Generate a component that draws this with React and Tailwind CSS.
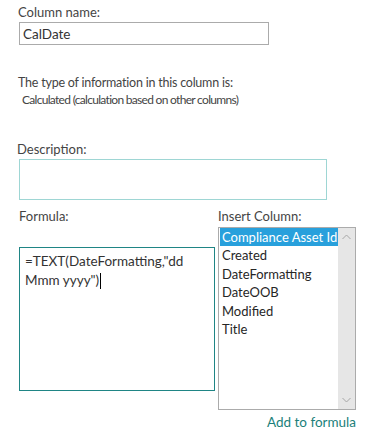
import React from 'react';

const items = ['Compliance Asset Id', 'Created', 'DateFormatting', 'DateOOB', 'Modified', 'Title'];

function Chevron({ up }) {
  return (
    <svg width="9" height="6" viewBox="0 0 9 6" className="block">
      <path
        d={up ? 'M0.5 5 L4.5 1 L8.5 5' : 'M0.5 1 L4.5 5 L8.5 1'}
        fill="none"
        stroke="#a6a6a6"
        strokeWidth="1"
      />
    </svg>
  );
}

export default function App() {
  return (
    <div
      className="w-[369px] h-[435px] bg-white text-[#444] text-[13px] leading-[18px] overflow-hidden"
      style={{ fontFamily: 'Lato, "Open Sans", sans-serif' }}
    >
      <div className="pt-[3px] pl-[18px]">Column name:</div>
      <div className="ml-[19px] mt-px w-[250px] h-[23px] border border-[#ababab] pl-[3px] flex items-center text-[#333] text-[13.5px]">
        CalDate
      </div>

      <div className="mt-[29px] pl-[18px] text-[12.5px] tracking-[-0.22px]">
        The type of information in this column is:
      </div>
      <div className="mt-[-1px] pl-[22px] text-[12px] tracking-[-0.7px]">
        Calculated (calculation based on other columns)
      </div>

      <div className="mt-[31px] pl-[17px]">Description:</div>
      <div className="ml-[19px] mt-px w-[308px] h-[41px] border border-[#9ed6d4]" />

      <div className="mt-[7px] flex">
        <div className="ml-[19px] w-[196px]">
          <div>Formula:</div>
          <div className="mt-[22px] h-[144px] border border-[#1f8585] px-[5px] pt-[4px] text-[#333] text-[13.5px] leading-[19px]">
            <div>=TEXT(DateFormatting,"dd</div>
            <div className="flex items-center">
              Mmm yyyy")<span className="inline-block w-px h-[16px] bg-black ml-px" />
            </div>
          </div>
        </div>

        <div className="ml-[3px] w-[138px]">
          <div>Insert Column:</div>
          <div className="mt-[2px] h-[183px] border border-[#ababab] flex text-[13px] leading-[18.4px] text-[#262626]">
            <div className="flex-1 pl-px">
              {items.map((it, i) => (
                <div
                  key={it}
                  className={
                    i === 0
                      ? 'bg-[#28a0dc] text-white pl-[2px] whitespace-nowrap overflow-hidden'
                      : 'pl-[2px] whitespace-nowrap overflow-hidden'
                  }
                >
                  {it}
                </div>
              ))}
            </div>
            <div className="w-[17px] bg-[#e6e6e6] flex flex-col items-center justify-between py-[6px]">
              <Chevron up />
              <Chevron />
            </div>
          </div>
          <div className="mt-[3px] text-right text-[#1b7f7a] text-[13.5px]">Add to formula</div>
        </div>
      </div>
    </div>
  );
}
